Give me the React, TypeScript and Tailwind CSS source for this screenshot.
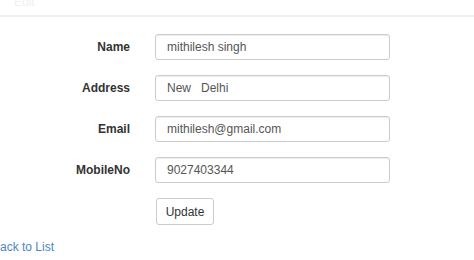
import React, { useState } from 'react';

const FIELDS = [
  { key: 'name', label: 'Name', value: 'mithilesh singh' },
  { key: 'address', label: 'Address', value: 'New   Delhi' },
  { key: 'email', label: 'Email', value: 'mithilesh@gmail.com' },
  { key: 'mobile', label: 'MobileNo', value: '9027403344' },
];

export default function App() {
  const [form, setForm] = useState<Record<string, string>>(
    Object.fromEntries(FIELDS.map((f) => [f.key, f.value]))
  );

  return (
    <div className="w-[474px] h-[260px] overflow-hidden bg-white text-[12px] text-[#333] font-['Liberation_Sans',Arial,sans-serif]">
      {/* clipped heading + rule */}
      <div className="h-[17px] overflow-hidden border-b-2 border-[#f0f0f0] pl-[14px]">
        <span className="block -mt-[7px] text-[12px] text-[#f1f1f1]">Edit</span>
      </div>

      <form className="pt-[17px]" onSubmit={(e) => e.preventDefault()}>
        {FIELDS.map((f) => (
          <div key={f.key} className="flex items-center mb-[15px]">
            <label className="w-[130px] text-right font-bold text-[12px] text-[#333]">{f.label}</label>
            <input
              value={form[f.key]}
              onChange={(e) => setForm((p) => ({ ...p, [f.key]: e.target.value }))}
              className="ml-[25px] w-[235px] h-[26px] px-[11px] border border-[#cccccc] rounded-[3px] text-[12px] text-[#555] shadow-[inset_0_1px_1px_rgba(0,0,0,0.075)] outline-none whitespace-pre"
            />
          </div>
        ))}

        <div className="flex">
          <button
            type="submit"
            className="ml-[156px] w-[58px] h-[27px] border border-[#cccccc] rounded-[3px] bg-white text-[12px] text-[#333]"
          >
            Update
          </button>
        </div>
      </form>

      <div className="mt-[13px] -ml-[8px]">
        <a href="#" className="text-[12px] text-[#4a86c0]">Back to List</a>
      </div>
    </div>
  );
}
